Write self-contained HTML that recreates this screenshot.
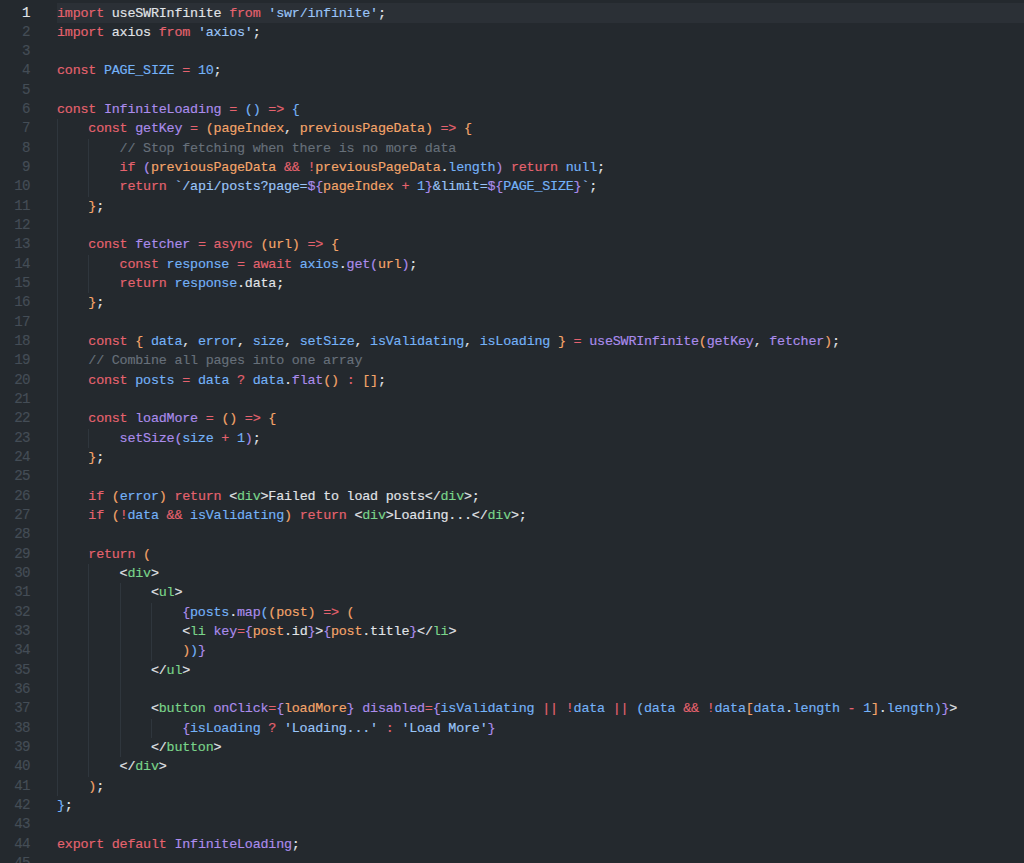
<!DOCTYPE html>
<html><head><meta charset="utf-8"><style>
html,body{margin:0;padding:0;}
body{width:1024px;height:863px;overflow:hidden;background:#24292e;position:relative;font-family:"Liberation Mono",monospace;font-size:13.4px;letter-spacing:-0.21px;}
.ln{position:absolute;left:0;width:29.9px;text-align:right;color:#444d56;height:19.33px;line-height:19.33px;white-space:pre;}
.ln.cur{color:#e1e4e8;}
.cl{position:absolute;left:57.0px;right:0;height:19.33px;line-height:19.33px;white-space:pre;color:#e1e4e8;-webkit-text-stroke:0.15px currentColor;}
.ln{-webkit-text-stroke:0.15px currentColor;font-size:14.2px;letter-spacing:-0.69px;}
.hl{position:absolute;left:57.0px;right:0;background:#2b3036;}
.g{position:absolute;width:1px;background:#2f363d;}
.k{color:#e6636f}.o{color:#e6636f}.f{color:#ab8cec}.v{color:#74b2f8}.p{color:#f5a56a}
.s{color:#9ac5f8}.n{color:#74b2f8}.w{color:#e1e4e8}.c{color:#67707a}.t{color:#7ad48a}
.B{color:#74b2f8}.O{color:#f5a56a}.P{color:#ab8cec}
</style></head><body>
<div class="hl" style="top:3.00px;height:19.50px"></div>
<div class="g" style="left:57.00px;top:119.48px;height:676.55px"></div>
<div class="g" style="left:88.32px;top:138.81px;height:57.99px"></div>
<div class="g" style="left:88.32px;top:254.79px;height:38.66px"></div>
<div class="g" style="left:88.32px;top:428.76px;height:19.33px"></div>
<div class="g" style="left:88.32px;top:564.07px;height:212.63px"></div>
<div class="g" style="left:119.64px;top:583.40px;height:173.97px"></div>
<div class="g" style="left:150.96px;top:602.73px;height:57.99px"></div>
<div class="g" style="left:150.96px;top:718.71px;height:19.33px"></div>
<div class="ln cur" style="top:3.50px">1</div><div class="cl" style="top:3.50px"><span class="k">import</span> useSWRInfinite <span class="k">from</span> <span class="s">'swr/infinite'</span>;</div>
<div class="ln" style="top:22.83px">2</div><div class="cl" style="top:22.83px"><span class="k">import</span> axios <span class="k">from</span> <span class="s">'axios'</span>;</div>
<div class="ln" style="top:42.16px">3</div><div class="cl" style="top:42.16px"></div>
<div class="ln" style="top:61.49px">4</div><div class="cl" style="top:61.49px"><span class="k">const</span> <span class="v">PAGE_SIZE</span> <span class="o">=</span> <span class="n">10</span>;</div>
<div class="ln" style="top:80.82px">5</div><div class="cl" style="top:80.82px"></div>
<div class="ln" style="top:100.15px">6</div><div class="cl" style="top:100.15px"><span class="k">const</span> <span class="f">InfiniteLoading</span> <span class="o">=</span> <span class="B">()</span> <span class="o">=&gt;</span> <span class="B">{</span></div>
<div class="ln" style="top:119.48px">7</div><div class="cl" style="top:119.48px">    <span class="k">const</span> <span class="f">getKey</span> <span class="o">=</span> <span class="O">(</span><span class="p">pageIndex</span>, <span class="p">previousPageData</span><span class="O">)</span> <span class="o">=&gt;</span> <span class="O">{</span></div>
<div class="ln" style="top:138.81px">8</div><div class="cl" style="top:138.81px">        <span class="c">// Stop fetching when there is no more data</span></div>
<div class="ln" style="top:158.14px">9</div><div class="cl" style="top:158.14px">        <span class="k">if</span> <span class="P">(</span><span class="p">previousPageData</span> <span class="o">&amp;&amp;</span> <span class="o">!</span><span class="p">previousPageData</span>.<span class="v">length</span><span class="P">)</span> <span class="k">return</span> <span class="v">null</span>;</div>
<div class="ln" style="top:177.47px">10</div><div class="cl" style="top:177.47px">        <span class="k">return</span> <span class="s">`/api/posts?page=</span><span class="P">${</span><span class="p">pageIndex</span> <span class="o">+</span> <span class="n">1</span><span class="P">}</span><span class="s">&amp;limit=</span><span class="P">${</span><span class="v">PAGE_SIZE</span><span class="P">}</span><span class="s">`</span>;</div>
<div class="ln" style="top:196.80px">11</div><div class="cl" style="top:196.80px">    <span class="O">}</span>;</div>
<div class="ln" style="top:216.13px">12</div><div class="cl" style="top:216.13px"></div>
<div class="ln" style="top:235.46px">13</div><div class="cl" style="top:235.46px">    <span class="k">const</span> <span class="f">fetcher</span> <span class="o">=</span> <span class="k">async</span> <span class="O">(</span><span class="p">url</span><span class="O">)</span> <span class="o">=&gt;</span> <span class="O">{</span></div>
<div class="ln" style="top:254.79px">14</div><div class="cl" style="top:254.79px">        <span class="k">const</span> <span class="v">response</span> <span class="o">=</span> <span class="k">await</span> <span class="v">axios</span>.<span class="f">get</span><span class="P">(</span><span class="p">url</span><span class="P">)</span>;</div>
<div class="ln" style="top:274.12px">15</div><div class="cl" style="top:274.12px">        <span class="k">return</span> <span class="v">response</span>.data;</div>
<div class="ln" style="top:293.45px">16</div><div class="cl" style="top:293.45px">    <span class="O">}</span>;</div>
<div class="ln" style="top:312.78px">17</div><div class="cl" style="top:312.78px"></div>
<div class="ln" style="top:332.11px">18</div><div class="cl" style="top:332.11px">    <span class="k">const</span> <span class="O">{</span> <span class="v">data</span>, <span class="v">error</span>, <span class="v">size</span>, <span class="v">setSize</span>, <span class="v">isValidating</span>, <span class="v">isLoading</span> <span class="O">}</span> <span class="o">=</span> <span class="f">useSWRInfinite</span><span class="O">(</span><span class="f">getKey</span>, <span class="f">fetcher</span><span class="O">)</span>;</div>
<div class="ln" style="top:351.44px">19</div><div class="cl" style="top:351.44px">    <span class="c">// Combine all pages into one array</span></div>
<div class="ln" style="top:370.77px">20</div><div class="cl" style="top:370.77px">    <span class="k">const</span> <span class="v">posts</span> <span class="o">=</span> <span class="v">data</span> <span class="o">?</span> <span class="v">data</span>.<span class="f">flat</span><span class="O">()</span> <span class="o">:</span> <span class="O">[]</span>;</div>
<div class="ln" style="top:390.10px">21</div><div class="cl" style="top:390.10px"></div>
<div class="ln" style="top:409.43px">22</div><div class="cl" style="top:409.43px">    <span class="k">const</span> <span class="f">loadMore</span> <span class="o">=</span> <span class="O">()</span> <span class="o">=&gt;</span> <span class="O">{</span></div>
<div class="ln" style="top:428.76px">23</div><div class="cl" style="top:428.76px">        <span class="f">setSize</span><span class="P">(</span><span class="v">size</span> <span class="o">+</span> <span class="n">1</span><span class="P">)</span>;</div>
<div class="ln" style="top:448.09px">24</div><div class="cl" style="top:448.09px">    <span class="O">}</span>;</div>
<div class="ln" style="top:467.42px">25</div><div class="cl" style="top:467.42px"></div>
<div class="ln" style="top:486.75px">26</div><div class="cl" style="top:486.75px">    <span class="k">if</span> <span class="O">(</span><span class="v">error</span><span class="O">)</span> <span class="k">return</span> &lt;<span class="t">div</span>&gt;Failed to load posts&lt;/<span class="t">div</span>&gt;;</div>
<div class="ln" style="top:506.08px">27</div><div class="cl" style="top:506.08px">    <span class="k">if</span> <span class="O">(</span><span class="o">!</span><span class="v">data</span> <span class="o">&amp;&amp;</span> <span class="v">isValidating</span><span class="O">)</span> <span class="k">return</span> &lt;<span class="t">div</span>&gt;Loading...&lt;/<span class="t">div</span>&gt;;</div>
<div class="ln" style="top:525.41px">28</div><div class="cl" style="top:525.41px"></div>
<div class="ln" style="top:544.74px">29</div><div class="cl" style="top:544.74px">    <span class="k">return</span> <span class="O">(</span></div>
<div class="ln" style="top:564.07px">30</div><div class="cl" style="top:564.07px">        &lt;<span class="t">div</span>&gt;</div>
<div class="ln" style="top:583.40px">31</div><div class="cl" style="top:583.40px">            &lt;<span class="t">ul</span>&gt;</div>
<div class="ln" style="top:602.73px">32</div><div class="cl" style="top:602.73px">                <span class="P">{</span><span class="v">posts</span>.<span class="f">map</span><span class="B">(</span><span class="O">(</span><span class="p">post</span><span class="O">)</span> <span class="o">=&gt;</span> <span class="O">(</span></div>
<div class="ln" style="top:622.06px">33</div><div class="cl" style="top:622.06px">                &lt;<span class="t">li</span> <span class="f">key</span><span class="o">=</span><span class="P">{</span><span class="p">post</span>.id<span class="P">}</span>&gt;<span class="P">{</span><span class="p">post</span>.title<span class="P">}</span>&lt;/<span class="t">li</span>&gt;</div>
<div class="ln" style="top:641.39px">34</div><div class="cl" style="top:641.39px">                <span class="O">)</span><span class="B">)</span><span class="P">}</span></div>
<div class="ln" style="top:660.72px">35</div><div class="cl" style="top:660.72px">            &lt;/<span class="t">ul</span>&gt;</div>
<div class="ln" style="top:680.05px">36</div><div class="cl" style="top:680.05px"></div>
<div class="ln" style="top:699.38px">37</div><div class="cl" style="top:699.38px">            &lt;<span class="t">button</span> <span class="f">onClick</span><span class="o">=</span><span class="P">{</span><span class="p">loadMore</span><span class="P">}</span> <span class="f">disabled</span><span class="o">=</span><span class="P">{</span><span class="v">isValidating</span> <span class="o">||</span> <span class="o">!</span><span class="v">data</span> <span class="o">||</span> <span class="B">(</span><span class="v">data</span> <span class="o">&amp;&amp;</span> <span class="o">!</span><span class="v">data</span><span class="O">[</span><span class="v">data</span>.<span class="v">length</span> <span class="o">-</span> <span class="n">1</span><span class="O">]</span>.<span class="v">length</span><span class="B">)</span><span class="P">}</span>&gt;</div>
<div class="ln" style="top:718.71px">38</div><div class="cl" style="top:718.71px">                <span class="P">{</span><span class="v">isLoading</span> <span class="o">?</span> <span class="s">'Loading...'</span> <span class="o">:</span> <span class="s">'Load More'</span><span class="P">}</span></div>
<div class="ln" style="top:738.04px">39</div><div class="cl" style="top:738.04px">            &lt;/<span class="t">button</span>&gt;</div>
<div class="ln" style="top:757.37px">40</div><div class="cl" style="top:757.37px">        &lt;/<span class="t">div</span>&gt;</div>
<div class="ln" style="top:776.70px">41</div><div class="cl" style="top:776.70px">    <span class="O">)</span>;</div>
<div class="ln" style="top:796.03px">42</div><div class="cl" style="top:796.03px"><span class="B">}</span>;</div>
<div class="ln" style="top:815.36px">43</div><div class="cl" style="top:815.36px"></div>
<div class="ln" style="top:834.69px">44</div><div class="cl" style="top:834.69px"><span class="k">export</span> <span class="k">default</span> <span class="f">InfiniteLoading</span>;</div>
<div class="ln" style="top:854.02px">45</div><div class="cl" style="top:854.02px"></div>
</body></html>
